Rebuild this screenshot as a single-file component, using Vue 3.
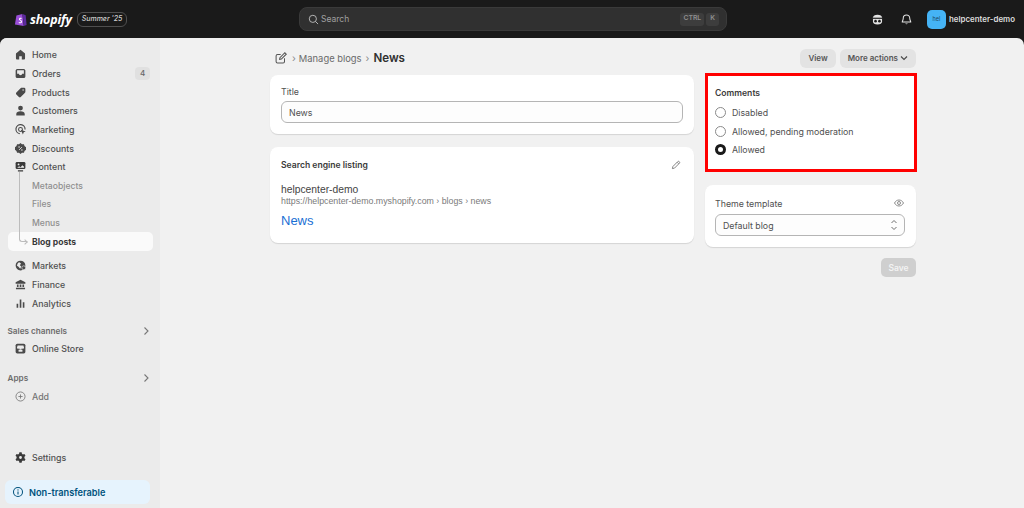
<script setup>
const mainNav = [
  { label: 'Home', icon: 'M10 2.500 3 8.600V16a1.500 1.500 0 0 0 1.500 1.500H8v-5h4v5h3.500A1.500 1.500 0 0 0 17 16V8.600z' },
  { label: 'Orders', badge: '4', icon: 'M5 3h10a2.500 2.500 0 0 1 2.500 2.500v9A2.500 2.500 0 0 1 15 17H5a2.500 2.500 0 0 1-2.500-2.500v-9A2.500 2.500 0 0 1 5 3zM4.800 5v5.500h2.700a2.500 2 0 0 0 5 0h2.700V5z' },
  { label: 'Products', icon: 'M11 2.500h4.500A2 2 0 0 1 17.500 4.500V9a2 2 0 0 1-.6 1.400l-6.500 6.500a2 2 0 0 1-2.800 0l-4-4a2 2 0 0 1 0-2.800l6.500-6.500A2 2 0 0 1 11 2.500zM14 5a1.100 1.100 0 1 0 0 2.200A1.100 1.100 0 0 0 14 5z' },
  { label: 'Customers', icon: 'M10 2.500a3.700 3.700 0 1 1 0 7.400 3.700 3.700 0 0 1 0-7.400zM3.500 15.500c0-2.800 2.800-4.300 6.500-4.300s6.500 1.500 6.500 4.300v2h-13z' }
]
</script>

<template>
  <div class="page">
    <header class="topbar">
      <div class="brand">
        <svg class="bag" viewBox="0 0 14 16">
          <path d="M1 13.500 2.600 3.800 9 2l1.500 13z" fill="#9a4fd8" />
          <path d="M9.300 2.200 12.600 3.400 13.600 14 10.600 15z" fill="#5b2a9e" />
          <path d="M8.200 6.300C6.500 5.800 5.200 6.600 5.300 7.800c.1 1.400 2.200 1.500 2.200 2.600 0 .8-1.200.8-2.200.2l-.3 1.200c1.700.8 3.600.2 3.700-1.500.1-1.600-2.100-1.800-2.100-2.700 0-.5.8-.7 1.900-.3z" fill="#fff" />
        </svg>
        <span class="wordmark">shopify</span>
        <span class="edition">Summer '25</span>
      </div>
      <div class="search">
        <svg class="search-icon" viewBox="0 0 20 20"><circle cx="9" cy="9" r="5.500" /><path d="m13 13 4 4" /></svg>
        <span class="search-text">Search</span>
        <kbd class="key">CTRL</kbd>
        <kbd class="key">K</kbd>
      </div>
      <div class="account">
        <svg class="top-icon" viewBox="0 0 20 20"><path d="M10 2.500c4 0 7 1.500 7 4.500v6.500c0 2.400-2.500 4-7 4s-7-1.600-7-4V7c0-3 3-4.500 7-4.500z" fill="#e3e3e3" /><rect x="3" y="7.200" width="14" height="1.800" fill="#1a1a1a" /><circle cx="7" cy="12.500" r="2" fill="#1a1a1a" /><circle cx="13" cy="12.500" r="2" fill="#1a1a1a" /></svg>
        <svg class="top-icon bell" viewBox="0 0 20 20"><path d="M10 3a5 5 0 0 0-5 5c0 3-1.500 4.500-1.500 6h13c0-1.500-1.500-3-1.500-6a5 5 0 0 0-5-5z" fill="none" stroke="#e3e3e3" stroke-width="1.600" /><path d="M8 16a2.200 2.200 0 0 0 4 0z" fill="#e3e3e3" /></svg>
        <span class="avatar">hel</span>
        <span class="store-name">helpcenter-demo</span>
      </div>
    </header>

    <div class="body">
      <aside class="sidebar">
        <nav class="nav">
          <a v-for="item in mainNav" :key="item.label" class="nav-row">
            <svg class="nav-icon" viewBox="0 0 20 20"><path :d="item.icon" fill="#4a4a4a" fill-rule="evenodd" /></svg>
            <span>{{ item.label }}</span>
            <span v-if="item.badge" class="badge">{{ item.badge }}</span>
          </a>
          <a class="nav-row">
            <svg class="nav-icon" viewBox="0 0 20 20"><path d="M9 16.500A7 7 0 1 1 17 10" fill="none" stroke="#4a4a4a" stroke-width="1.800" /><circle cx="10" cy="10" r="3" fill="none" stroke="#4a4a4a" stroke-width="1.600" /><path d="m10.500 10.500 7.500 2.500-3 1.300-1.300 3.200z" fill="#4a4a4a" /></svg>
            <span>Marketing</span>
          </a>
          <a class="nav-row">
            <svg class="nav-icon" viewBox="0 0 20 20"><path d="M10 1.500 12.300 3.300h3L16.200 6l2.300 2v4l-2.300 2-.9 2.700h-3L10 18.500l-2.300-1.800h-3L3.800 14l-2.300-2V8l2.300-2 .9-2.700h3z" fill="#4a4a4a" /><path d="m7.800 12.200 4.400-4.400" stroke="#ebebeb" stroke-width="1.300" /><circle cx="7.800" cy="7.800" r="1.100" fill="#ebebeb" /><circle cx="12.200" cy="12.200" r="1.100" fill="#ebebeb" /></svg>
            <span>Discounts</span>
          </a>
          <a class="nav-row">
            <svg class="nav-icon" viewBox="0 0 20 20"><rect x="2.500" y="3" width="15" height="11" rx="2" fill="#3a3a3a" /><circle cx="7" cy="6.800" r="1.400" fill="#ebebeb" /><path d="m4.800 12 3.200-2.500 2 1.500 3-3 2.500 2.500V12z" fill="#ebebeb" /><path d="M6 16.800h8" stroke="#3a3a3a" stroke-width="1.700" /></svg>
            <span>Content</span>
          </a>
          <div class="subnav">
            <span class="tree-line"></span>
            <a class="sub-row">Metaobjects</a>
            <a class="sub-row">Files</a>
            <a class="sub-row">Menus</a>
            <a class="sub-row active">Blog posts</a>
          </div>
        </nav>

        <nav class="nav nav-second">
          <a class="nav-row">
            <svg class="nav-icon" viewBox="0 0 20 20"><path d="M10 2.500a7.500 7.500 0 1 0 0 15 7.500 7.500 0 0 0 0-15zM8 5l2.800 1.800L9 9.500l2.200 2-1.700 3.500L7 12l-2.400-1.500C4.800 8 6 5.800 8 5z" fill="#4a4a4a" fill-rule="evenodd" /><circle cx="15" cy="13.500" r="3" fill="#4a4a4a" stroke="#ebebeb" /></svg>
            <span>Markets</span>
          </a>
          <a class="nav-row">
            <svg class="nav-icon" viewBox="0 0 20 20"><path d="M10 2.500 2.500 6.500V9h15V6.500zM4.500 10h2.500v4H4.500zM8.800 10h2.500v4H8.800zM13 10h2.500v4H13zM3 15h14v2.300H3z" fill="#4a4a4a" /></svg>
            <span>Finance</span>
          </a>
          <a class="nav-row">
            <svg class="nav-icon" viewBox="0 0 20 20"><path d="M4 10.500h2.500V16.500H4zM8.800 4h2.500v12.500H8.800zM13.500 8h2.500v8.500h-2.500z" fill="#4a4a4a" /></svg>
            <span>Analytics</span>
          </a>
        </nav>

        <div class="section-head">
          <span>Sales channels</span>
          <svg class="chevron" viewBox="0 0 10 10"><path d="m3.500 1.500 3.500 3.500-3.500 3.500" /></svg>
        </div>
        <a class="nav-row">
          <svg class="nav-icon" viewBox="0 0 20 20"><rect x="2.500" y="2.500" width="15" height="15" rx="2.500" fill="#4a4a4a" /><path d="M5.500 5.500h9l1 3.500a1.800 1.800 0 0 1-3.400.5 2.100 2.100 0 0 1-4.200 0 1.800 1.800 0 0 1-3.400-.5zM7 12h6v3H7z" fill="#ebebeb" /></svg>
          <span>Online Store</span>
        </a>

        <div class="section-head section-apps">
          <span>Apps</span>
          <svg class="chevron" viewBox="0 0 10 10"><path d="m3.500 1.500 3.500 3.500-3.500 3.500" /></svg>
        </div>
        <a class="nav-row muted">
          <svg class="nav-icon" viewBox="0 0 20 20"><circle cx="10" cy="10" r="7" fill="none" stroke="#777" stroke-width="1.300" /><path d="M10 6.800v6.400M6.800 10h6.400" stroke="#777" stroke-width="1.300" /></svg>
          <span>Add</span>
        </a>

        <a class="nav-row settings">
          <svg class="nav-icon" viewBox="0 0 20 20"><path d="M8.300 2h3.400l.5 2.300 1.500.9 2.300-.7 1.700 2.900-1.700 1.600v2l1.700 1.600-1.700 2.900-2.300-.7-1.500.9-.5 2.300H8.300l-.5-2.300-1.500-.9-2.300.7-1.700-2.900L4 11V9L2.300 7.400 4 4.500l2.300.7 1.500-.9zM10 7.800a2.200 2.200 0 1 0 0 4.400 2.200 2.200 0 0 0 0-4.400z" fill="#3a3a3a" fill-rule="evenodd" /></svg>
          <span>Settings</span>
        </a>

        <div class="plan">
          <svg class="plan-icon" viewBox="0 0 20 20"><circle cx="10" cy="10" r="7.500" fill="none" stroke="#00527c" stroke-width="1.700" /><path d="M10 9v5" stroke="#00527c" stroke-width="1.800" /><circle cx="10" cy="6.500" r="1.100" fill="#00527c" /></svg>
          <span>Non-transferable</span>
        </div>
      </aside>

      <main class="main">
        <div class="content">
          <div class="page-head">
            <svg class="edit-icon" viewBox="0 0 20 20"><path d="M15 10.500V15a2 2 0 0 1-2 2H5a2 2 0 0 1-2-2V7a2 2 0 0 1 2-2h4.500" /><path d="m8 12 .5-2.500 7-7 2 2-7 7z" /></svg>
            <span class="crumb-sep">›</span>
            <span class="crumb">Manage blogs</span>
            <span class="crumb-sep">›</span>
            <h1 class="page-title">News</h1>
            <div class="head-actions">
              <button class="btn">View</button>
              <button class="btn">
                More actions
                <svg class="btn-caret" viewBox="0 0 10 10"><path d="m2 3.500 3 3 3-3" /></svg>
              </button>
            </div>
          </div>

          <div class="columns">
            <div class="col-left">
              <section class="card title-card">
                <label class="field-label">Title</label>
                <div class="input">News</div>
              </section>
              <section class="card seo-card">
                <div class="card-head">
                  <h2 class="card-title">Search engine listing</h2>
                  <svg class="pencil" viewBox="0 0 20 20"><path d="m4 16 .8-3.500 8-8a1.600 1.600 0 0 1 2.700 2.700l-8 8zM12 5.500 14.500 8" /></svg>
                </div>
                <p class="seo-store">helpcenter-demo</p>
                <p class="seo-url">https://helpcenter-demo.myshopify.com › blogs › news</p>
                <p class="seo-link">News</p>
              </section>
            </div>

            <div class="col-right">
              <section class="card comments-card">
                <h2 class="card-title">Comments</h2>
                <div class="radio-list">
                  <div class="radio-row"><span class="radio"></span>Disabled</div>
                  <div class="radio-row"><span class="radio"></span>Allowed, pending moderation</div>
                  <div class="radio-row"><span class="radio checked"></span>Allowed</div>
                </div>
              </section>
              <section class="card theme-card">
                <div class="theme-head">
                  <span class="field-label">Theme template</span>
                  <svg class="eye" viewBox="0 0 20 20"><path d="M2.500 10C4 7 6.800 5 10 5s6 2 7.500 5c-1.500 3-4.300 5-7.500 5s-6-2-7.500-5z" /><circle cx="10" cy="10" r="2.500" /></svg>
                </div>
                <div class="input select">
                  Default blog
                  <svg class="updown" viewBox="0 0 10 14"><path d="m2.500 5 2.500-2.500L7.500 5M2.500 9 5 11.500 7.500 9" /></svg>
                </div>
              </section>
              <div class="save-row"><button class="save">Save</button></div>
            </div>
          </div>
        </div>
      </main>
    </div>
  </div>
</template>

<style scoped>
.page {
  width: 1024px;
  height: 508px;
  display: flex;
  flex-direction: column;
  overflow: hidden;
  background: #1a1a1a;
  font-family: Inter, "Liberation Sans", sans-serif;
  color: #303030;
}

/* Top bar */
.topbar {
  height: 38px;
  flex: none;
  display: flex;
  align-items: center;
  background: #1a1a1a;
}
.brand {
  display: flex;
  align-items: center;
  width: 299px;
  padding-left: 14px;
  box-sizing: border-box;
}
.bag { width: 13px; height: 15px; }
.wordmark {
  margin-left: 3px;
  color: #fff;
  font: italic 700 12.500px "Open Sans", sans-serif;
  letter-spacing: -0.2px;
}
.edition {
  margin-left: 5px;
  padding: 0 4px;
  height: 13px;
  line-height: 12px;
  border: 1px solid #4f4f4f;
  border-radius: 6px;
  color: #d0d0d0;
  font-size: 7px;
  font-style: italic;
  font-weight: 500;
}
.search {
  width: 428px;
  height: 24px;
  box-sizing: border-box;
  display: flex;
  align-items: center;
  gap: 1px;
  padding: 0 7px;
  background: #303030;
  border: 1px solid #3a3a3a;
  border-radius: 8px;
}
.search-icon {
  width: 13px;
  height: 13px;
  fill: none;
  stroke: #b5b5b5;
  stroke-width: 1.500;
}
.search-text {
  flex: 1;
  color: #a0a0a0;
  font-size: 8.500px;
}
.key {
  height: 13px;
  padding: 0 3px;
  margin-left: 1px;
  line-height: 13px;
  background: #3d3d3d;
  border-radius: 3px;
  color: #8f8f8f;
  font: 600 6.800px Inter, sans-serif;
}
.key + .key { padding: 0 4px; }
.account {
  flex: 1;
  display: flex;
  align-items: center;
  padding-left: 144px;
}
.top-icon { width: 13px; height: 13px; }
.bell { margin-left: 16px; }
.avatar {
  width: 19px;
  height: 19px;
  margin-left: 14px;
  border-radius: 5px;
  background: #45b3f5;
  color: #1b4a66;
  font-size: 5.500px;
  line-height: 19px;
  text-align: center;
}
.store-name {
  margin-left: 3px;
  color: #dedede;
  font-size: 7.900px;
  font-weight: 600;
}

/* Body */
.body {
  flex: 1;
  min-height: 0;
  display: flex;
  background: #f1f1f1;
  border-radius: 7px 7px 0 0;
  overflow: hidden;
}
.sidebar {
  width: 160px;
  flex: none;
  box-sizing: border-box;
  padding: 7.500px 0 0;
  background: #ebebeb;
  display: flex;
  flex-direction: column;
}
.nav { display: flex; flex-direction: column; }
.nav-second { margin-top: 5.500px; }
.nav-row {
  height: 18.700px;
  flex: none;
  display: flex;
  align-items: center;
  padding: 0 10px 0 14px;
  font-size: 8.800px;
  font-weight: 500;
  color: #505050;
}
.nav-icon {
  width: 13px;
  height: 13px;
  margin-right: 5px;
  flex: none;
}
.muted { color: #747474; }
.badge {
  margin-left: auto;
  width: 15px;
  height: 13px;
  line-height: 13px;
  text-align: center;
  border-radius: 4px;
  background: #e0e0e0;
  color: #666;
  font-size: 8px;
}
.subnav {
  position: relative;
  display: flex;
  flex-direction: column;
}
.tree-line {
  position: absolute;
  left: 19px;
  top: -4px;
  width: 7px;
  height: 69px;
  border-left: 1px solid #bcbcbc;
  border-bottom: 1px solid #bcbcbc;
  border-bottom-left-radius: 3px;
}
.tree-line::after {
  content: "";
  position: absolute;
  right: 0;
  bottom: -2.500px;
  width: 3px;
  height: 3px;
  border-top: 1px solid #bcbcbc;
  border-right: 1px solid #bcbcbc;
  transform: rotate(45deg);
}
.sub-row {
  height: 18.700px;
  display: flex;
  align-items: center;
  margin: 0 7px 0 8px;
  padding-left: 24px;
  font-size: 8.600px;
  font-weight: 500;
  color: #8f8f8f;
}
.sub-row.active {
  background: #fafafa;
  border-radius: 5px;
  color: #3a3a3a;
  font-weight: 650;
}
.section-head {
  display: flex;
  align-items: center;
  justify-content: space-between;
  height: 18px;
  margin-top: 9px;
  padding: 0 9px 0 7.500px;
  font-size: 8.200px;
  font-weight: 600;
  color: #6b6b6b;
}
.section-apps { margin-top: 10.700px; }
.chevron {
  width: 10px;
  height: 10px;
  fill: none;
  stroke: #777;
  stroke-width: 1.100;
}
.settings { margin-top: auto; }
.plan {
  flex: none;
  height: 24px;
  margin: 13.600px 10px 4px 5px;
  padding-left: 7px;
  display: flex;
  align-items: center;
  gap: 5px;
  border-radius: 6px;
  background: #e6f3fd;
  color: #00527c;
  font-size: 9.200px;
  font-weight: 600;
}
.plan-icon { width: 12px; height: 12px; }

/* Main column */
.main { flex: 1; min-width: 0; }
.content {
  width: 646px;
  margin: 0 auto;
  padding-top: 10px;
  transform: translateX(1px);
}
.page-head {
  height: 20px;
  display: flex;
  align-items: center;
  gap: 3px;
  margin-bottom: 7px;
}
.edit-icon {
  width: 14px;
  height: 14px;
  margin-left: 4px;
  fill: none;
  stroke: #555;
  stroke-width: 1.500;
}
.crumb-sep { color: #8a8a8a; font-size: 10px; margin: 0 1px; }
.crumb { color: #6a6a6a; font-size: 9.400px; margin-left: -1px; }
.page-title {
  margin: 0;
  font-size: 11.600px;
  font-weight: 600;
  color: #303030;
}
.head-actions {
  margin-left: auto;
  display: flex;
  gap: 4px;
}
.btn {
  height: 19px;
  padding: 0 8px;
  display: flex;
  align-items: center;
  gap: 1px;
  border: 0;
  border-radius: 6px;
  background: #e3e3e3;
  color: #555;
  font: 600 8px Inter, sans-serif;
}
.btn-caret {
  width: 10px;
  height: 10px;
  margin-right: -1px;
  fill: none;
  stroke: #4a4a4a;
  stroke-width: 1.200;
}
.columns {
  display: grid;
  grid-template-columns: 424px 211px;
  gap: 11px;
}
.col-left, .col-right {
  display: flex;
  flex-direction: column;
}
.card {
  background: #fff;
  border-radius: 8px;
  box-shadow: 0 1px 1px rgba(0, 0, 0, 0.12);
  box-sizing: border-box;
}
.title-card {
  height: 59px;
  padding: 11px 11px 0;
}
.field-label {
  display: block;
  font-size: 8.800px;
  color: #505050;
}
.input {
  height: 22px;
  margin-top: 4px;
  padding: 0 7px;
  box-sizing: border-box;
  display: flex;
  align-items: center;
  border: 1px solid #b5b5b5;
  border-radius: 6px;
  background: #fdfdfd;
  font-size: 8.800px;
  color: #505050;
}
.seo-card {
  height: 96px;
  margin-top: 13px;
  padding: 11px 11px 0;
}
.card-head {
  display: flex;
  align-items: center;
  justify-content: space-between;
  height: 13px;
}
.card-title {
  margin: 0;
  font-size: 8.600px;
  font-weight: 600;
  color: #3a3a3a;
}
.pencil {
  width: 12px;
  height: 12px;
  margin-right: 1px;
  fill: none;
  stroke: #777;
  stroke-width: 1.500;
}
.seo-store {
  margin: 13px 0 0;
  font: 10.300px "Liberation Sans", sans-serif;
  color: #444;
}
.seo-url {
  margin: 1px 0 0;
  font: 8.800px "Liberation Sans", sans-serif;
  color: #7a7a7a;
}
.seo-link {
  margin: 7px 0 0;
  font: 13px "Liberation Sans", sans-serif;
  color: #1a6fd4;
}

/* Comments card with the red highlight box */
.comments-card {
  height: 99px;
  margin: -2px -1px 0 0;
  padding: 12px 7px 0;
  border-radius: 0;
  border: 3px solid #f00;
  box-shadow: none;
}
.radio-list {
  display: flex;
  flex-direction: column;
  margin-top: 5px;
}
.radio-row {
  height: 18.800px;
  display: flex;
  align-items: center;
  gap: 6px;
  font-size: 8.800px;
  color: #505050;
}
.radio {
  width: 11px;
  height: 11px;
  box-sizing: border-box;
  border: 1px solid #8a8a8a;
  border-radius: 50%;
  background: #fff;
}
.radio.checked { border: 3.500px solid #1a1a1a; }
.theme-card {
  height: 62px;
  margin-top: 13px;
  padding: 11px 11px 0 10px;
}
.theme-head {
  display: flex;
  align-items: center;
  justify-content: space-between;
  height: 14px;
}
.eye {
  width: 12px;
  height: 12px;
  fill: none;
  stroke: #777;
  stroke-width: 1.400;
}
.select {
  margin-top: 4px;
  justify-content: space-between;
}
.updown {
  width: 10px;
  height: 14px;
  margin-right: -2px;
  fill: none;
  stroke: #6f6f6f;
  stroke-width: 1;
}
.save-row {
  display: flex;
  justify-content: flex-end;
  margin-top: 11px;
}
.save {
  width: 35px;
  height: 19px;
  border: 0;
  border-radius: 5px;
  background: #cfcfcf;
  color: #f3f3f3;
  font: 600 8.500px Inter, sans-serif;
}
</style>

<style>
html, body { background: #1a1a1a; }
</style>
